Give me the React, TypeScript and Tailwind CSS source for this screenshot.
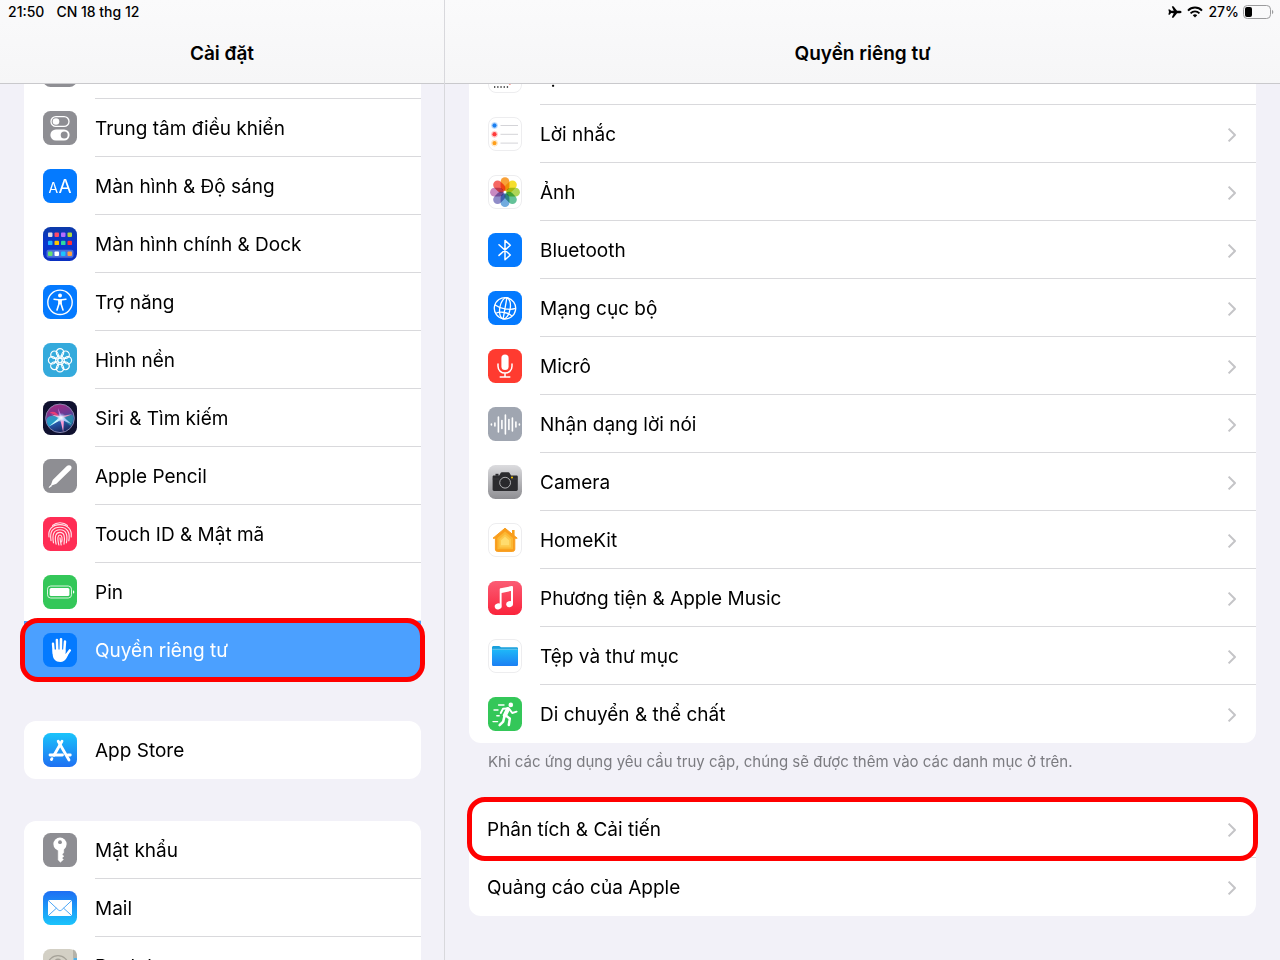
import type { ReactNode } from "react";
import { clsx } from "clsx";
import { IoAirplane } from "react-icons/io5";

type Item = {
  label: string;
  icon?: ReactNode;
  active?: boolean;
  marked?: boolean;
};

function Tile({ fill, outlined, children }: { fill: string; outlined?: boolean; children?: ReactNode }) {
  return (
    <svg viewBox="0 0 34 34" className="h-[34px] w-[34px] shrink-0" fill="none" aria-hidden="true">
      {outlined ? (
        <rect x="0.5" y="0.5" width="33" height="33" rx="7.5" fill={fill} stroke="#ededef" />
      ) : (
        <rect width="34" height="34" rx="7.5" fill={fill} />
      )}
      {children}
    </svg>
  );
}

function ControlCenterIcon() {
  return (
    <Tile fill="#8e8e93">
      <rect x="8" y="5.6" width="18" height="9.8" rx="4.9" stroke="#fff" strokeWidth="1.3" />
      <circle cx="13" cy="10.5" r="3.3" fill="#fff" />
      <rect x="7.4" y="18.5" width="19.2" height="11" rx="5.5" fill="#fff" />
      <circle cx="21.2" cy="24" r="3.5" fill="#8e8e93" />
    </Tile>
  );
}

function DisplayIcon() {
  return (
    <Tile fill="#047aff">
      <text x="5.5" y="24" fill="#fff" fontSize="14" fontFamily="Inter, sans-serif">A</text>
      <text x="15.5" y="24" fill="#fff" fontSize="19" fontFamily="Inter, sans-serif">A</text>
    </Tile>
  );
}

const dockColors = [
  ["#dcdde6", "#ff4a68", "#b46cff", "#b0d83c"],
  ["#1fb6ff", "#ffc400", "#2fd8a0", "#ff3038"],
  ["#66e070", "#ffffff", "#1cc4ff", "#ffa040"],
];

function HomeScreenIcon() {
  return (
    <Tile fill="url(#dock-bg)">
      <defs>
        <linearGradient id="dock-bg" x1="0" y1="0" x2="0" y2="1">
          <stop offset="0" stopColor="#0c3aa8" />
          <stop offset="0.5" stopColor="#0a35d0" />
          <stop offset="1" stopColor="#0a2fc0" />
        </linearGradient>
      </defs>
      <rect x="3.5" y="22.8" width="27" height="8" rx="2" fill="#4a6fdc" />
      {dockColors.map((row, y) =>
        row.map((color, x) => (
          <rect key={color} x={5 + x * 6.5} y={[5.6, 13.8, 24.6][y]} width="4.5" height="4.3" rx="0.9" fill={color} />
        )),
      )}
    </Tile>
  );
}

function AccessibilityIcon() {
  return (
    <Tile fill="#047aff">
      <circle cx="17" cy="17.3" r="12.2" stroke="#fff" strokeWidth="1.4" />
      <circle cx="17" cy="10.6" r="2" fill="#fff" />
      <path d="M11 14.2 L17 15 L23 14.2" stroke="#fff" strokeWidth="1.5" strokeLinecap="round" />
      <path d="M15 14.4 h4 l-.2 4.8 h-3.6z" fill="#fff" />
      <path d="M16.1 18.5 L14 25 M17.9 18.5 L20 25" stroke="#fff" strokeWidth="1.6" strokeLinecap="round" />
    </Tile>
  );
}

function WallpaperIcon() {
  return (
    <Tile fill="#34aadc">
      {[0, 45, 90, 135, 180, 225, 270, 315].map((angle) => (
        <g key={angle} transform={`rotate(${angle} 17 17.3)`} stroke="#fff" strokeWidth="1.2">
          <circle cx="17" cy="9.4" r="3.7" />
          <path d="M17 15 C14.9 13.6 14.9 11.9 15.5 11.2 M17 15 C19.1 13.6 19.1 11.9 18.5 11.2" strokeWidth="0.9" />
        </g>
      ))}
      <circle cx="17" cy="17.3" r="2.2" stroke="#fff" strokeWidth="1.1" />
    </Tile>
  );
}

function SiriIcon() {
  return (
    <Tile fill="#10112f">
      <defs>
        <linearGradient id="siri-orb" x1="0.3" y1="0" x2="0.6" y2="1">
          <stop offset="0" stopColor="#a82a80" />
          <stop offset="0.4" stopColor="#6b3a94" />
          <stop offset="0.65" stopColor="#2458a8" />
          <stop offset="1" stopColor="#1b2358" />
        </linearGradient>
        <radialGradient id="siri-core">
          <stop offset="0" stopColor="#fff" />
          <stop offset="0.4" stopColor="#d7ecff" stopOpacity="0.75" />
          <stop offset="1" stopColor="#8fc9ff" stopOpacity="0" />
        </radialGradient>
      </defs>
      <circle cx="17" cy="17.3" r="14.3" fill="url(#siri-orb)" stroke="#8f8db5" strokeWidth="0.9" />
      <path d="M3.6 18 C6 13.5 12 14.5 17 16.5 C13 21 9 24 6.2 25.5 C4.6 23.6 3.6 21 3.6 18z" fill="#18c4dd" fillOpacity="0.65" />
      <path d="M18 17 C23 13 27 13 30 14.5 C30.6 19 29.4 23 27.5 25z" fill="#2a9fae" fillOpacity="0.65" />
      <path d="M17 16.5 C14 11 10 9.5 6.4 12 C9.5 12.4 13 14.5 17 16.5z" fill="#ff3d72" fillOpacity="0.85" />
      <path d="M18.4 14.8 L6 25.6 L18.6 18.6z" fill="#c8fbff" />
      <path d="M17 17.6 L20.2 31 L21 17.4z" fill="#ff9ad2" />
      <path d="M18 18.6 L28.4 23 L20 15.6z" fill="#b5d0ff" fillOpacity="0.9" />
      <path d="M18.4 17.4 L29.4 13.2 L18.6 15z" fill="#ff8fc0" fillOpacity="0.9" />
      <path d="M16.8 17 L14.8 6.8 L19 16z" fill="#e08cff" fillOpacity="0.7" />
      <path d="M17.4 17.6 L8 13.6 L18.4 15.4z" fill="#ffd0e0" fillOpacity="0.9" />
      <circle cx="18.2" cy="16.8" r="5" fill="url(#siri-core)" />
    </Tile>
  );
}

function PencilIcon() {
  return (
    <Tile fill="#8e8e93">
      <path d="M23.6 7.2 C25 5.8 27.2 6 28 7 C28.9 8 28.8 9.8 27.5 11 L13.4 24.8 L8.7 26.4 L8 25.7 L9.7 21z" fill="#fff" />
      <path d="M8 26.2 L6.2 28.4 L8.6 27z" fill="#fff" stroke="#fff" strokeLinejoin="round" />
    </Tile>
  );
}

function TouchIdIcon() {
  return (
    <Tile fill="#ff2d55">
      <g stroke="#ffe3e9" strokeWidth="1.15" strokeLinecap="round">
        <path d="M9.6 8.4 C13.4 4.8 20.6 4.8 24.4 8.4" />
        <path d="M6 20 C4.8 12 9.6 7.6 17 7.6 C24.4 7.6 29.2 12.4 28.2 20" />
        <path d="M8 23.6 C6.4 14.4 10 10.2 17 10.2 C24.2 10.2 27.4 15.4 25.8 23.8" />
        <path d="M10.5 25.8 C8.8 17 11 12.8 17 12.8 C23 12.8 25 17.6 23.4 25.8" />
        <path d="M13.1 27.2 C11.4 19.4 12.6 15.4 17 15.4 C21.4 15.4 22.2 20 21 27.2" />
        <path d="M15.8 28 C14.2 20.6 14.8 18 17 18 C19.2 18 19.4 21.6 18.6 25" />
        <path d="M17 20.8 C17.2 23 17.4 24.6 18.2 28" />
      </g>
    </Tile>
  );
}

function BatteryIcon() {
  return (
    <Tile fill="#34c759">
      <rect x="4.5" y="11" width="24" height="12" rx="3.2" stroke="#d9f5df" strokeWidth="1" />
      <rect x="6.6" y="13" width="19.8" height="8" rx="1.6" fill="#fff" />
      <path d="M30 15.2 C31.8 16 31.8 18 30 18.8z" fill="#fff" />
    </Tile>
  );
}

function HandIcon() {
  return (
    <Tile fill="#047aff">
      <g stroke="#fff" strokeLinecap="round">
        <path d="M10.8 20.5 L10 10.6" strokeWidth="2.4" />
        <path d="M14.3 18 L13.9 7" strokeWidth="2.5" />
        <path d="M17.8 18 L18 6.2" strokeWidth="2.6" />
        <path d="M21.2 19 L22 8.5" strokeWidth="2.5" />
        <path d="M22.5 23.2 L26.9 17.3" strokeWidth="2.3" />
      </g>
      <path d="M9.6 16.5 H22.4 L22.6 21 L26 19.6 C24.4 23.6 22.8 29 17.4 29 C12.4 29 9.9 25.6 9.7 21.5z" fill="#fff" />
    </Tile>
  );
}

function AppStoreIcon() {
  return (
    <Tile fill="url(#store-bg)">
      <defs>
        <linearGradient id="store-bg" x1="0" y1="0" x2="0" y2="1">
          <stop offset="0" stopColor="#1ac4fb" />
          <stop offset="1" stopColor="#1f70f2" />
        </linearGradient>
      </defs>
      <g stroke="#fff" strokeWidth="2.8" strokeLinecap="round">
        <path d="M19 8.2 L11 22.2" />
        <path d="M15.2 8.2 L26 27" />
        <path d="M7 22 H19.5 M25 22 H27.3" />
        <path d="M8.9 25.6 L8.4 26.6" />
      </g>
    </Tile>
  );
}

function KeyIcon() {
  return (
    <Tile fill="#8e8e93">
      <path d="M15.2 16 V27 L17.4 29.2 L20.4 26.6 L18.9 25 L20.9 23.2 L19 21.4 L20.7 19.8 V16z" fill="#fff" stroke="#fff" strokeWidth="0.5" strokeLinejoin="round" />
      <circle cx="17" cy="11.1" r="6.6" fill="#fff" />
      <circle cx="17" cy="9.2" r="1.9" fill="#8e8e93" />
    </Tile>
  );
}

function MailIcon() {
  return (
    <Tile fill="url(#mail-bg)">
      <defs>
        <linearGradient id="mail-bg" x1="0" y1="0" x2="0" y2="1">
          <stop offset="0" stopColor="#1e6ff3" />
          <stop offset="1" stopColor="#1bc4fb" />
        </linearGradient>
      </defs>
      <rect x="5" y="9" width="24" height="16" rx="1.8" fill="#fff" />
      <path d="M5.4 9.6 L15.4 19 C16.4 19.9 17.6 19.9 18.6 19 L28.6 9.6 M5.4 24.5 L13.4 17.2 M28.6 24.5 L20.6 17.2" stroke="#3a9df5" strokeWidth="0.9" />
    </Tile>
  );
}

function ContactsIcon() {
  return (
    <Tile fill="#d3d0c5">
      <path d="M30 0.5 H30 C33 1.5 34 4 34 8 V9 H30z" fill="#b5b2a8" />
      <path d="M30.5 9 H34 V17 H30.5z" fill="#4fb0e8" />
      <path d="M30.5 17 H34 V25 H30.5z" fill="#f0a03c" />
      <circle cx="15" cy="17" r="10.4" stroke="#a5a298" strokeWidth="1.2" />
      <circle cx="15" cy="14" r="4.4" fill="#a5a298" />
      <path d="M7.5 23.5 C9 19.5 21 19.5 22.5 23.5 C18.5 28 11.5 28 7.5 23.5z" fill="#a5a298" />
    </Tile>
  );
}

function CalendarIcon() {
  return (
    <Tile fill="#fff" outlined>
      <path d="M6 28 H22" stroke="#222" strokeWidth="1.3" strokeDasharray="1.3 1.9" />
      <path d="M6 24 H19" stroke="#222" strokeWidth="1.3" strokeDasharray="1.3 1.9" />
      <circle cx="21.8" cy="24.4" r="1.1" fill="#ff3b30" />
    </Tile>
  );
}

function RemindersIcon() {
  const dots = ["#1a7ff0", "#ff3b3b", "#ff9f1a"];
  return (
    <Tile fill="#fff" outlined>
      {dots.map((color, i) => (
        <g key={color} transform={`translate(0 ${8.5 + i * 8.8})`}>
          <circle cx="6.5" r="3" stroke={color} strokeOpacity="0.35" strokeWidth="0.8" />
          <circle cx="6.5" r="2.2" fill={color} />
          <path d="M12.5 0 H30" stroke="#d4d4d8" strokeWidth="1" />
        </g>
      ))}
    </Tile>
  );
}

const petals = ["#f7941d", "#f4d90e", "#a3cf3f", "#4fb98a", "#5d9fdb", "#7f7cc0", "#c07ab8", "#f4524d"];

function PhotosIcon() {
  return (
    <Tile fill="#fff" outlined>
      {petals.map((color, i) => (
        <rect
          key={color}
          x="12.6"
          y="2.3"
          width="8.8"
          height="13.6"
          rx="4.4"
          fill={color}
          fillOpacity="0.88"
          className="mix-blend-multiply"
          transform={`rotate(${i * 45} 17 17.2)`}
        />
      ))}
    </Tile>
  );
}

function BluetoothIcon() {
  return (
    <Tile fill="#047aff">
      <path d="M11 11.8 L22.3 22 L17 26.8 V7.4 L22.3 12.2 L11 22.4" stroke="#fff" strokeWidth="1.5" strokeLinejoin="round" strokeLinecap="round" />
    </Tile>
  );
}

function NetworkIcon() {
  return (
    <Tile fill="#047aff">
      <g stroke="#fff" strokeWidth="1.3" transform="rotate(10 17 17.3)">
        <circle cx="17" cy="17.3" r="10.7" />
        <ellipse cx="17" cy="17.3" rx="5.2" ry="10.7" />
        <path d="M17 6.6 V28 M6.3 15.6 C12 18.6 22 18.6 27.7 15.6 M8.8 23.8 C13 20.8 21 20.8 25.2 23.8" />
      </g>
    </Tile>
  );
}

function MicIcon() {
  return (
    <Tile fill="#ff3b30">
      <rect x="13.4" y="5.5" width="7.2" height="15.6" rx="3.6" fill="#fff" />
      <path d="M10 15 V17.2 C10 26.4 24 26.4 24 17.2 V15 M17 24 V27.8 M12.2 28 H21.8" stroke="#fff" strokeWidth="1.5" strokeLinecap="round" />
    </Tile>
  );
}

function SpeechIcon() {
  const bars = [1, 3, 15, 8, 19, 10, 13, 5, 1];
  return (
    <Tile fill="#a0a6b1">
      {bars.map((h, i) => (
        <path key={i} d={`M${3.4 + i * 3.5} ${17.5 - h / 2} v${h}`} stroke="#fff" strokeWidth="1.6" strokeLinecap="round" />
      ))}
    </Tile>
  );
}

function CameraIcon() {
  return (
    <Tile fill="url(#camera-bg)">
      <defs>
        <linearGradient id="camera-bg" x1="0" y1="0" x2="0" y2="1">
          <stop offset="0" stopColor="#dcdcdf" />
          <stop offset="1" stopColor="#8e8e92" />
        </linearGradient>
      </defs>
      <path d="M7.5 8.8 h3 v2 h-3z" fill="#2b2b2e" />
      <path d="M6 10.4 H11.2 L12.8 7.8 C13 7.4 13.4 7.2 13.8 7.2 H20.4 C20.9 7.2 21.2 7.4 21.4 7.8 L23 10.4 H28.4 C29.3 10.4 29.8 10.9 29.8 11.8 V24.6 C29.8 25.5 29.3 26 28.4 26 H6 C5.1 26 4.6 25.5 4.6 24.6 V11.8 C4.6 10.9 5.1 10.4 6 10.4z" fill="#2b2b2e" />
      <path d="M4.6 14 H11 M23 14 H29.8" stroke="#454548" strokeWidth="0.6" />
      <circle cx="17.1" cy="17.7" r="5.4" fill="#29292c" stroke="#b0b0b3" strokeWidth="1" />
      <circle cx="24" cy="12.6" r="1" fill="#ffcc00" />
    </Tile>
  );
}

function HomeKitIcon() {
  return (
    <Tile fill="#fff" outlined>
      <path d="M24 7 h2.6 v7 h-2.6z" fill="#f7a01c" />
      <path d="M17 5.2 L29.2 15.2 H26.8 V26 C26.8 27.6 26 28.4 24.6 28.4 H9.6 C8 28.4 7.4 27.6 7.4 26 V15.2 H5z" fill="#f99d1c" stroke="#f99d1c" strokeLinejoin="round" />
      <path d="M17 8.4 L25 15 V26.2 H9.4 V15z" fill="#fbb733" />
      <path d="M17 11.2 L23 16.2 V24.4 H11.4 V16.2z" fill="#fdc84b" />
      <path d="M17 13.8 L21.2 17.3 V22.2 H13 V17.3z" fill="#ffdc6e" />
    </Tile>
  );
}

function MusicIcon() {
  return (
    <Tile fill="url(#music-bg)">
      <defs>
        <linearGradient id="music-bg" x1="0" y1="0" x2="0" y2="1">
          <stop offset="0" stopColor="#fb5c74" />
          <stop offset="1" stopColor="#fa233b" />
        </linearGradient>
      </defs>
      <path d="M11.7 8.3 C11.7 7.6 12.1 7.3 12.7 7.2 L23.6 5.1 C24.5 4.9 25 5.3 25 6.1 V9.6 L13.6 11.9 V24.6 H11.7z" fill="#fff" />
      <path d="M23 8 h2 V23 h-2z" fill="#fff" />
      <ellipse cx="10.2" cy="25.3" rx="3.5" ry="3" fill="#fff" transform="rotate(-18 10.2 25.3)" />
      <ellipse cx="21.6" cy="23.2" rx="3.4" ry="3" fill="#fff" transform="rotate(-18 21.6 23.2)" />
    </Tile>
  );
}

function FilesIcon() {
  return (
    <Tile fill="#fff" outlined>
      <defs>
        <linearGradient id="files-bg" x1="0" y1="0" x2="0" y2="1">
          <stop offset="0" stopColor="#1eb7f8" />
          <stop offset="1" stopColor="#1c7ff3" />
        </linearGradient>
      </defs>
      <path d="M4 8.6 C4 7.6 4.6 7 5.6 7 H11 C12 7 12.2 8.2 13.2 8.2 H28.6 C29.6 8.2 30 8.8 30 9.6 V13 H4z" fill="#18a0dd" />
      <path d="M4 10.8 H30 V25.4 C30 26.5 29.4 27 28.4 27 H5.6 C4.6 27 4 26.5 4 25.4z" fill="url(#files-bg)" />
      <path d="M4.4 10.3 H29.6" stroke="#8bd8f7" strokeWidth="0.7" />
    </Tile>
  );
}

function MotionIcon() {
  return (
    <Tile fill="#34c759">
      <circle cx="22.8" cy="7.9" r="2.3" fill="#fff" />
      <g stroke="#fff" strokeLinecap="round" strokeLinejoin="round">
        <path d="M19.9 12.2 L16.9 18.4" strokeWidth="4.2" />
        <path d="M20 11.4 L15 11.8 L12.7 16" strokeWidth="1.9" />
        <path d="M21.6 12.4 L24.2 16 L28.6 14.6" strokeWidth="1.9" />
        <path d="M17.8 18.6 L21.8 21.6 L20.8 28" strokeWidth="2.5" />
        <path d="M16.4 19.4 L15.2 24.6 L11.6 28.2" strokeWidth="2.5" />
        <path d="M10.6 8 H16 M6 13 H10 M8.8 18.8 H11.2 M5 24.6 H9.6" strokeWidth="1.4" />
      </g>
    </Tile>
  );
}

function Chevron() {
  return (
    <svg viewBox="0 0 10 16" className="h-4 w-[10px] shrink-0" fill="none" aria-hidden="true">
      <path d="M1.6 1.6 L8 8 L1.6 14.4" stroke="#c4c4c7" strokeWidth="2" strokeLinejoin="round" />
    </svg>
  );
}

const generalItems: Item[] = [
  { label: "", icon: <Tile fill="#8e8e93" /> },
  { label: "Trung tâm điều khiển", icon: <ControlCenterIcon /> },
  { label: "Màn hình & Độ sáng", icon: <DisplayIcon /> },
  { label: "Màn hình chính & Dock", icon: <HomeScreenIcon /> },
  { label: "Trợ năng", icon: <AccessibilityIcon /> },
  { label: "Hình nền", icon: <WallpaperIcon /> },
  { label: "Siri & Tìm kiếm", icon: <SiriIcon /> },
  { label: "Apple Pencil", icon: <PencilIcon /> },
  { label: "Touch ID & Mật mã", icon: <TouchIdIcon /> },
  { label: "Pin", icon: <BatteryIcon /> },
  { label: "Quyền riêng tư", icon: <HandIcon />, active: true, marked: true },
];

const storeItems: Item[] = [{ label: "App Store", icon: <AppStoreIcon /> }];

const accountItems: Item[] = [
  { label: "Mật khẩu", icon: <KeyIcon /> },
  { label: "Mail", icon: <MailIcon /> },
  { label: "Danh bạ", icon: <ContactsIcon /> },
];

const privacyItems: Item[] = [
  { label: "Lịch", icon: <CalendarIcon /> },
  { label: "Lời nhắc", icon: <RemindersIcon /> },
  { label: "Ảnh", icon: <PhotosIcon /> },
  { label: "Bluetooth", icon: <BluetoothIcon /> },
  { label: "Mạng cục bộ", icon: <NetworkIcon /> },
  { label: "Micrô", icon: <MicIcon /> },
  { label: "Nhận dạng lời nói", icon: <SpeechIcon /> },
  { label: "Camera", icon: <CameraIcon /> },
  { label: "HomeKit", icon: <HomeKitIcon /> },
  { label: "Phương tiện & Apple Music", icon: <MusicIcon /> },
  { label: "Tệp và thư mục", icon: <FilesIcon /> },
  { label: "Di chuyển & thể chất", icon: <MotionIcon /> },
];

const analyticsItems: Item[] = [{ label: "Phân tích & Cải tiến", marked: true }, { label: "Quảng cáo của Apple" }];

function Group({ items, chevrons }: { items: Item[]; chevrons?: boolean }) {
  return (
    <ul className="rounded-xl bg-white">
      {items.map((item, index) => (
        <li key={item.label} className="relative">
          <a
            href="#"
            aria-current={item.active ? "page" : undefined}
            className={clsx(
              "flex h-[58px] items-center gap-[18px]",
              item.icon ? "pl-[19px]" : "pl-[18px]",
              item.active && "rounded-b-xl bg-[#4ba0ff] text-white",
            )}
          >
            {item.icon}
            <span
              className={clsx(
                "flex h-full min-w-0 flex-1 items-center justify-between border-b pt-0.5 pr-[19px]",
                index === items.length - 1 || item.active ? "border-transparent" : "border-[#d9d9dc]",
              )}
            >
              <span className="truncate">{item.label}</span>
              {chevrons && <Chevron />}
            </span>
          </a>
          {item.marked && (
            <span
              className={clsx(
                "pointer-events-none absolute -top-[3px] -bottom-[3px] rounded-[18px] border-[5px] border-[#ff0000]",
                chevrons ? "-inset-x-0.5" : "-inset-x-1",
              )}
            />
          )}
        </li>
      ))}
    </ul>
  );
}

function StatusIcons() {
  return (
    <div className="flex items-center gap-1">
      <IoAirplane className="h-[14px] w-[14px]" />
      <svg viewBox="0 0 18 13" className="h-3 w-[18px]" fill="none" stroke="#000" strokeWidth="2" aria-hidden="true">
        <path d="M1.4 4.9 C5.6 0.6 12.4 0.6 16.6 4.9" />
        <path d="M4.2 7.9 C6.9 5.2 11.1 5.2 13.8 7.9" />
        <path d="M9 12.4 L6.6 10 C8 8.7 10 8.7 11.4 10z" fill="#000" stroke="none" />
      </svg>
      <span>27%</span>
      <svg viewBox="0 0 31 14" className="h-[14px] w-[31px]" fill="none" aria-hidden="true">
        <rect x="0.5" y="0.5" width="27" height="13" rx="3.8" stroke="#9b9b9d" />
        <rect x="2" y="2" width="7" height="10" rx="2" fill="#000" />
        <path d="M29 4.8 C30.8 5.6 30.8 8.4 29 9.2z" fill="#9b9b9d" />
      </svg>
    </div>
  );
}

function PaneHeader({ title, children }: { title: string; children: ReactNode }) {
  return (
    <header className="relative z-10 h-[84px] shrink-0 border-b border-[#c9c9cc] bg-linear-to-b from-[#fafafb] to-[#f6f6f7]">
      <div className="flex h-6 items-center pr-1.5 pl-2 text-sm font-medium">{children}</div>
      <h1 className="pt-4 text-center text-[19px] leading-7 font-semibold">{title}</h1>
    </header>
  );
}

export default function App() {
  return (
    <div className="flex h-screen overflow-hidden bg-[#f2f1f8] font-['Inter','Liberation_Sans',sans-serif] text-[19px] leading-6 text-black">
      <aside className="flex w-[445px] shrink-0 flex-col border-r border-[#d8d8dc]">
        <PaneHeader title="Cài đặt">
          <div className="flex gap-3">
            <span>21:50</span>
            <span>CN 18 thg 12</span>
          </div>
        </PaneHeader>
        <nav className="min-h-0 flex-1 overflow-hidden pr-[23px] pl-6">
          <div className="-mt-[43px] flex flex-col gap-[42px]">
            <Group items={generalItems} />
            <Group items={storeItems} />
            <Group items={accountItems} />
          </div>
        </nav>
      </aside>

      <main className="flex min-w-0 flex-1 flex-col">
        <PaneHeader title="Quyền riêng tư">
          <div className="ml-auto">
            <StatusIcons />
          </div>
        </PaneHeader>
        <div className="min-h-0 flex-1 overflow-hidden px-6">
          <div className="-mt-[37px]">
            <Group items={privacyItems} chevrons />
            <p className="px-[19px] pt-[7px] pb-[26px] text-[15px] text-[#7b7b80]">
              Khi các ứng dụng yêu cầu truy cập, chúng sẽ được thêm vào các danh mục ở trên.
            </p>
            <Group items={analyticsItems} chevrons />
          </div>
        </div>
      </main>
    </div>
  );
}
